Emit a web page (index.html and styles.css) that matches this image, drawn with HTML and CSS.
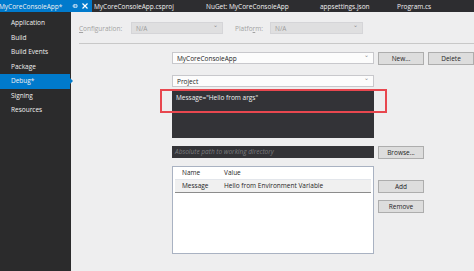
FILE: index.html
```html
<!DOCTYPE html>
<html lang="en">
<head>
  <meta charset="UTF-8" />
  <title>MyCoreConsoleApp - Debug</title>
  <link rel="stylesheet" href="styles.css">
</head>
<body>
  <div class="tabs">
    <div class="tab active">
      <span class="tab-title">MyCoreConsoleApp*</span>
      <svg class="pin" width="6" height="6" viewBox="0 0 6 6"><path d="M0.5 3h1.5M2 1.2v3.6M2 1.8h3v2.4h-3" fill="none" stroke="#cfe6f7" stroke-width="1"/></svg>
      <svg class="close" width="6" height="6" viewBox="0 0 6 6"><path d="M0.5 0.5l5 5M5.5 0.5l-5 5" stroke="#ffffff" stroke-width="1.2"/></svg>
    </div>
    <div class="tab w2">MyCoreConsoleApp.csproj</div>
    <div class="tab w3">NuGet: MyCoreConsoleApp</div>
    <div class="tab w4">appsettings.json</div>
    <div class="tab w5">Program.cs</div>
  </div>

  <div class="main">
    <nav class="sidebar">
      <div class="nav-item">Application</div>
      <div class="nav-item">Build</div>
      <div class="nav-item">Build Events</div>
      <div class="nav-item">Package</div>
      <div class="nav-item selected">Debug*</div>
      <div class="nav-item">Signing</div>
      <div class="nav-item">Resources</div>
    </nav>

    <section class="content">
      <div class="config-row">
        <label class="lbl cfg"><u>C</u>onfiguration:</label>
        <div class="combo disabled c1">N/A<span class="arrow">&#8964;</span></div>
        <label class="lbl plat">Platfo<u>r</u>m:</label>
        <div class="combo disabled c2">N/A<span class="arrow">&#8964;</span></div>
      </div>
      <div class="divider"></div>

      <div class="form">
        <div class="combo field r1">MyCoreConsoleApp<span class="arrow">&#8964;</span></div>
        <div class="btn">New...</div>
        <div class="btn">Delete</div>

        <div class="combo field r2">Project<span class="arrow">&#8964;</span></div>

        <div class="args r3">
          Message="Hello from args"
          <div class="highlight"></div>
        </div>

        <div class="path r4">Absolute path to working directory</div>
        <div class="btn r4b">Browse...</div>

        <div class="env r5">
          <div class="env-row head"><span class="col-name">Name</span><span>Value</span></div>
          <div class="env-row item"><span class="col-name">Message</span><span>Hello from Environment Variable</span></div>
        </div>
        <div class="side-btns">
          <div class="btn">Add</div>
          <div class="btn">Remove</div>
        </div>
      </div>
    </section>
  </div>
</body>
</html>
```

FILE: styles.css
```css
body {
  margin: 0;
  width: 474px;
  height: 271px;
  overflow: hidden;
  font-family: 'Open Sans', 'Noto Sans', sans-serif;
  font-size: 6.5px;
  background: #eeeeef;
  color: #1e1e1e;
}

.tabs {
  display: flex;
  height: 12px;
  background: #2d2d30;
  color: #f1f1f1;
  white-space: nowrap;
}

.tab {
  display: flex;
  align-items: center;
  padding-left: 2px;
  overflow: hidden;
}

.tab.active {
  width: 92px;
  background: #007acc;
  padding-left: 0;
}

.tab-title {
  margin-left: -1px;
  width: 73px;
}

.pin {
  margin-right: 4px;
}

.w2 { width: 110px; }
.w3 { width: 112px; }
.w4 { width: 75px; }
.w5 { width: 60px; }

.main {
  display: flex;
  height: 259px;
}

.sidebar {
  width: 72px;
  background: #2b2b2c;
  color: #f1f1f1;
  padding-top: 4px;
  box-sizing: border-box;
}

.nav-item {
  height: 14.5px;
  line-height: 14.5px;
  padding-left: 11px;
  position: relative;
}

.nav-item.selected {
  background: #007acc;
  width: 70px;
  box-sizing: border-box;
}

.nav-item.selected::after {
  content: "";
  position: absolute;
  right: -3px;
  top: 4px;
  border-left: 3px solid #007acc;
  border-top: 3px solid transparent;
  border-bottom: 3px solid transparent;
}

.content {
  flex: 1;
  padding-left: 8px;
}

.config-row {
  display: flex;
  align-items: center;
  margin-top: 10px;
  height: 12px;
}

.lbl {
  color: #a2a2a2;
}

.cfg { width: 52px; }
.plat { margin-left: 12px; width: 35px; }

.combo {
  position: relative;
  height: 12px;
  line-height: 11px;
  box-sizing: border-box;
  padding-left: 4px;
  border: 1px solid #cccedb;
  background: #fcfcfc;
}

.combo.disabled {
  background: #dfdfe0;
  border-color: #d5d5d8;
  color: #9b9b9b;
}

.c1 { width: 92px; }
.c2 { width: 93px; }

.arrow {
  position: absolute;
  right: 4px;
  top: -3px;
  font-size: 6px;
  color: #8a8a8a;
}

.divider {
  height: 1px;
  background: #c8c8c8;
  margin-top: 9px;
}

.form {
  display: grid;
  grid-template-columns: 202px 46px 46px;
  column-gap: 4px;
  margin-left: 93px;
  margin-top: 8px;
}

.field {
  border-color: #c8c8cc;
}

.r2 {
  grid-column: 1;
  margin-top: 10px;
}

.args {
  grid-column: 1;
  position: relative;
  margin-top: 3px;
  height: 48px;
  background: #333337;
  color: #f1f1f1;
  padding: 3px 4px;
  box-sizing: border-box;
}

.highlight {
  position: absolute;
  left: -12px;
  top: -1px;
  width: 227px;
  height: 24px;
  border: 2px solid #e8474f;
  box-sizing: border-box;
}

.path {
  grid-column: 1;
  margin-top: 8px;
  height: 12px;
  line-height: 12px;
  background: #333337;
  color: #7d7d80;
  font-style: italic;
  padding-left: 3px;
}

.r4b {
  margin-top: 8px;
}

.btn {
  height: 13px;
  line-height: 11px;
  box-sizing: border-box;
  text-align: center;
  background: #dddddd;
  border: 1px solid #adadad;
}

.env {
  grid-column: 1;
  margin-top: 7px;
  height: 88px;
  background: #ffffff;
  border: 1px solid #a9b2c2;
  box-sizing: border-box;
}

.env-row {
  display: flex;
  height: 12px;
  line-height: 12px;
  padding-left: 7px;
  margin: 0 2px;
}

.env-row.head {
  border-bottom: 1px solid #e3e6eb;
}

.env-row.item {
  background: #f0f0f0;
  border-bottom: 1px solid #8c8c8c;
}

.col-name {
  width: 42px;
}

.side-btns {
  grid-column: 2;
  display: flex;
  flex-direction: column;
  gap: 7px;
  margin-top: 21px;
}
```
